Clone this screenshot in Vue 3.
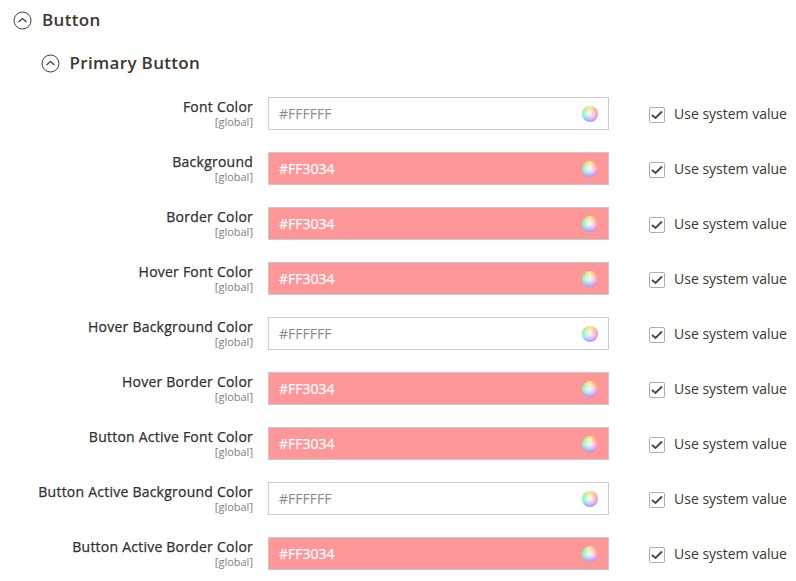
<script setup>
const rows = [
  { label: 'Font Color', value: '#FFFFFF', filled: false },
  { label: 'Background', value: '#FF3034', filled: true },
  { label: 'Border Color', value: '#FF3034', filled: true },
  { label: 'Hover Font Color', value: '#FF3034', filled: true },
  { label: 'Hover Background Color', value: '#FFFFFF', filled: false },
  { label: 'Hover Border Color', value: '#FF3034', filled: true },
  { label: 'Button Active Font Color', value: '#FF3034', filled: true },
  { label: 'Button Active Background Color', value: '#FFFFFF', filled: false },
  { label: 'Button Active Border Color', value: '#FF3034', filled: true }
]
</script>

<template>
  <div class="page">
    <div class="section-title">
      <svg class="toggle" width="19" height="19" viewBox="0 0 19 19">
        <circle cx="9.5" cy="9.5" r="8.5" />
        <path d="M5.5 11 L9.5 7.5 L13.5 11" />
      </svg>
      <span>Button</span>
    </div>

    <div class="sub-title">
      <svg class="toggle" width="19" height="19" viewBox="0 0 19 19">
        <circle cx="9.5" cy="9.5" r="8.5" />
        <path d="M5.5 11 L9.5 7.5 L13.5 11" />
      </svg>
      <span>Primary Button</span>
    </div>

    <div class="rows">
      <div v-for="row in rows" :key="row.label" class="row">
        <div class="label">
          <div class="label-name">{{ row.label }}</div>
          <div class="label-scope">[global]</div>
        </div>
        <div class="field" :class="{ filled: row.filled }">
          <span>{{ row.value }}</span>
          <i class="swatch"></i>
        </div>
        <div class="system">
          <span class="check">
            <svg width="12" height="10" viewBox="0 0 12 10">
              <path d="M1 5 L4.5 8 L11 1.5" />
            </svg>
          </span>
          <span>Use system value</span>
        </div>
      </div>
    </div>
  </div>
</template>

<style>
html,
body {
  background: #fff;
  overflow: hidden;
}
</style>

<style scoped>
.page {
  width: 796px;
  height: 581px;
  overflow: hidden;
  box-sizing: border-box;
  padding-top: 7px;
  font-family: "Open Sans", sans-serif;
  color: #303030;
}

.section-title,
.sub-title {
  display: flex;
  align-items: center;
  font-weight: 600;
  font-size: 17px;
  letter-spacing: 0.33px;
  color: #41362f;
}

.section-title {
  height: 24px;
  padding-left: 13px;
  gap: 10px;
}

.sub-title {
  height: 24px;
  margin-top: 19px;
  padding-left: 41px;
  gap: 9.5px;
}

.toggle {
  margin-top: 3px;
}

.toggle circle {
  fill: none;
  stroke: #41362f;
  stroke-width: 1;
}

.toggle path {
  fill: none;
  stroke: #41362f;
  stroke-width: 1.1;
}

.rows {
  margin-top: 23px;
  display: flex;
  flex-direction: column;
  gap: 22px;
}

.row {
  display: flex;
  align-items: flex-start;
  height: 33px;
}

.label {
  width: 253px;
  text-align: right;
  padding-top: 1px;
}

.label-name {
  font-size: 14px;
  line-height: 18px;
  letter-spacing: 0.23px;
  -webkit-text-stroke: 0.25px #303030;
  color: #303030;
}

.label-scope {
  font-size: 11px;
  line-height: 11px;
  color: #808080;
}

.field {
  width: 341px;
  height: 33px;
  margin-left: 15px;
  box-sizing: border-box;
  border: 1px solid #cccccc;
  background: #fff;
  display: flex;
  align-items: center;
  justify-content: space-between;
  padding: 0 10px;
  font-size: 14px;
  color: #8a8a8a;
}

.field.filled {
  background: #ff9698;
  color: #fff;
  -webkit-text-stroke: 0.25px #fff;
  border-color: #c8c8c8;
}

.swatch {
  width: 16px;
  height: 16px;
  border-radius: 50%;
  background:
    radial-gradient(circle, rgba(255, 255, 255, 0.95) 0%, rgba(255, 255, 255, 0.5) 40%, rgba(255, 255, 255, 0) 75%),
    conic-gradient(#ffe070, #ff9f70, #ff80c8, #b880ff, #7aa8ff, #70f0c8, #90f080, #ffe070);
}

.system {
  margin-left: 40px;
  height: 33px;
  display: flex;
  align-items: center;
  gap: 9px;
  font-size: 14px;
  white-space: nowrap;
  color: #41362f;
}

.check {
  width: 16px;
  height: 16px;
  box-sizing: border-box;
  border: 1px solid #adadad;
  border-radius: 2px;
  display: flex;
  align-items: center;
  justify-content: center;
  background: #fff;
  margin-top: 2px;
}

.check path {
  fill: none;
  stroke: #514943;
  stroke-width: 2;
}
</style>
